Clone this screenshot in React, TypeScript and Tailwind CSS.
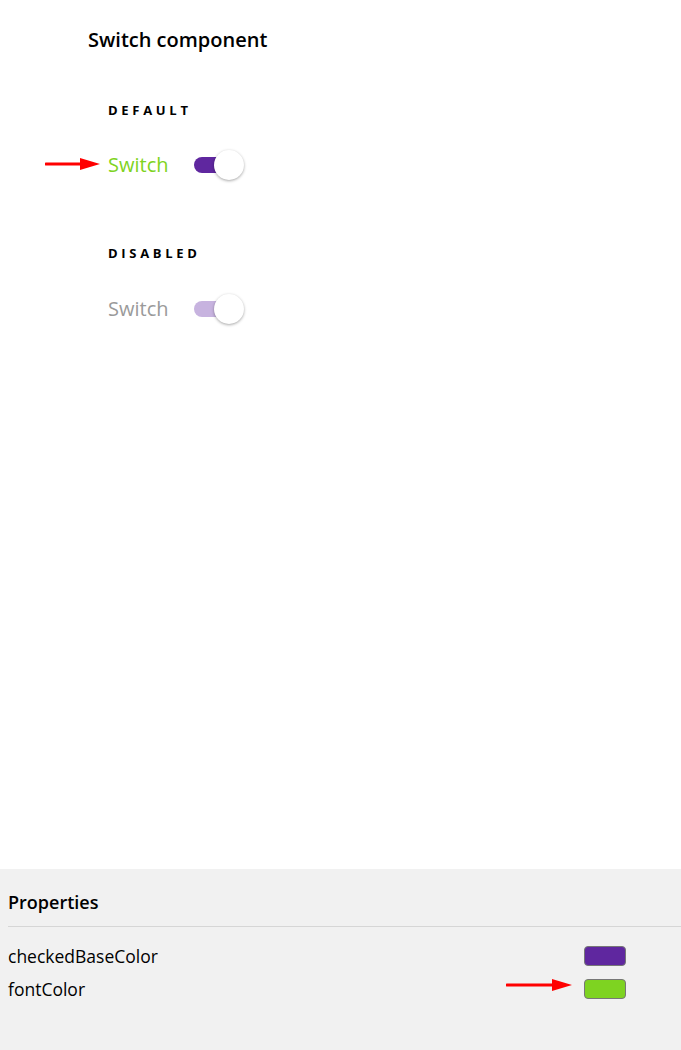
import React from 'react';

const font = { fontFamily: '"Open Sans", "Noto Sans", sans-serif' };

function Arrow({ width }: { width: number }) {
    return (
        <svg width={width} height="14" viewBox={`0 0 ${width} 14`} className="block">
            <line x1="1" y1="7" x2={width - 18} y2="7" stroke="#ff0000" strokeWidth="3" strokeLinecap="round" />
            <polygon points={`${width - 20},1 ${width},7 ${width - 20},13`} fill="#ff0000" />
        </svg>
    );
}

function Toggle({ disabled }: { disabled?: boolean }) {
    return (
        <div className="relative w-[50px] h-[30px] flex items-center">
            <div className={`w-[38px] h-[16px] rounded-full ${disabled ? 'bg-[#c7b3df]' : 'bg-[#5f279f]'}`} />
            <div className="absolute left-[20px] top-0 w-[30px] h-[30px] rounded-full bg-white shadow-[0_1px_3px_rgba(0,0,0,0.35)]" />
        </div>
    );
}

export default function App() {
    return (
        <div className="w-[681px] h-[1050px] flex flex-col bg-white text-black" style={font}>
            <div className="flex-1 pl-[88px] pt-[27px]">
                <h1 className="text-[20px] leading-[26px] font-semibold">Switch component</h1>

                <div className="pl-[20px] mt-[48px]">
                    <div className="text-[13px] leading-[18px] font-bold tracking-[3.7px]">DEFAULT</div>
                    <div className="relative flex items-center gap-[25px] mt-[31px] h-[30px]">
                        <div className="absolute left-[-63px] top-[7px]">
                            <Arrow width={55} />
                        </div>
                        <span className="text-[20px] text-[#7ed321]">Switch</span>
                        <Toggle />
                    </div>

                    <div className="text-[13px] leading-[18px] font-bold tracking-[3.7px] mt-[64px]">DISABLED</div>
                    <div className="flex items-center gap-[25px] mt-[32px] h-[30px]">
                        <span className="text-[20px] text-[#9a9a9a]">Switch</span>
                        <Toggle disabled />
                    </div>
                </div>
            </div>

            <div className="h-[181px] bg-[#f1f1f1] pl-[8px]">
                <div className="text-[18px] leading-[24px] font-semibold pt-[21px]">Properties</div>
                <div className="border-b border-[#d6d6d6] mt-[12px]" />
                <div className="flex flex-col gap-[13px] mt-[19px] pr-[55px]">
                    <div className="flex items-center justify-between h-[20px]">
                        <span className="text-[17.5px]">checkedBaseColor</span>
                        <div className="w-[42px] h-[20px] rounded-[4px] bg-[#5f279f] border border-[#777]" />
                    </div>
                    <div className="flex items-center justify-between h-[20px]">
                        <span className="text-[17.5px]">fontColor</span>
                        <div className="relative">
                            <div className="absolute right-[54px] top-[-1px]">
                                <Arrow width={66} />
                            </div>
                            <div className="w-[42px] h-[20px] rounded-[4px] bg-[#7ed321] border border-[#777]" />
                        </div>
                    </div>
                </div>
            </div>
        </div>
    );
}
